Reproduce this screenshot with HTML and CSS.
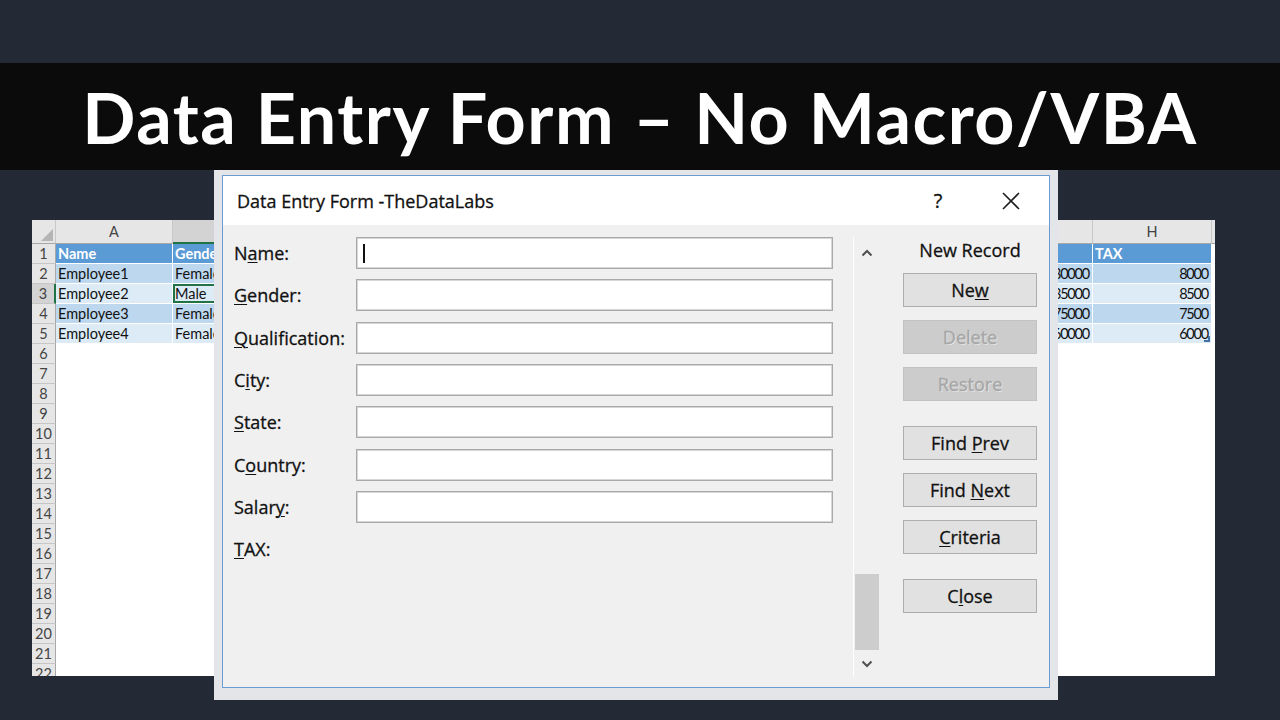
FILE: index.html
```html
<!DOCTYPE html>
<html lang="en">
<head>
<meta charset="utf-8">
<title>Data Entry Form – No Macro/VBA</title>
<link rel="stylesheet" href="styles.css">
</head>
<body>
<div class="topgap"></div>
<header class="band"><h1>Data Entry Form – No Macro/VBA</h1></header>
<main class="stage">
  <div class="sheet">
    <table class="grid">
      <colgroup>
        <col class="w-rh"><col class="w-a"><col class="w-b"><col class="w-c"><col class="w-d"><col class="w-e"><col class="w-f"><col class="w-g"><col class="w-h"><col class="w-i">
      </colgroup>
      <thead>
        <tr class="hdr">
          <th class="corner"><svg class="tri" width="12" height="12" viewBox="0 0 12 12"><polygon points="12,0 12,12 0,12" fill="#b5b5b5"/></svg></th>
          <th>A</th><th class="selcol"></th><th></th><th></th><th></th><th></th><th></th><th>H</th><th class="lastcol"></th>
        </tr>
      </thead>
      <tbody>
        <tr><td class="rh">1</td><td class="th">Name</td><td class="th">Gender</td><td class="th"></td><td class="th"></td><td class="th"></td><td class="th"></td><td class="th"></td><td class="th">TAX</td><td></td></tr>
        <tr><td class="rh">2</td><td class="bd">Employee1</td><td class="bd">Female</td><td class="bd"></td><td class="bd"></td><td class="bd"></td><td class="bd"></td><td class="bd num">80000</td><td class="bd num">8000</td><td></td></tr>
        <tr><td class="rh selrow">3</td><td class="bl">Employee2</td><td class="bl selcell">Male</td><td class="bl"></td><td class="bl"></td><td class="bl"></td><td class="bl"></td><td class="bl num">85000</td><td class="bl num">8500</td><td></td></tr>
        <tr><td class="rh">4</td><td class="bd">Employee3</td><td class="bd">Female</td><td class="bd"></td><td class="bd"></td><td class="bd"></td><td class="bd"></td><td class="bd num">75000</td><td class="bd num">7500</td><td></td></tr>
        <tr><td class="rh">5</td><td class="bl">Employee4</td><td class="bl">Female</td><td class="bl"></td><td class="bl"></td><td class="bl"></td><td class="bl"></td><td class="bl num">60000</td><td class="bl num handle">6000</td><td></td></tr>
        <tr><td class="rh">6</td><td></td><td></td><td></td><td></td><td></td><td></td><td></td><td></td><td></td></tr>
        <tr><td class="rh">7</td><td></td><td></td><td></td><td></td><td></td><td></td><td></td><td></td><td></td></tr>
        <tr><td class="rh">8</td><td></td><td></td><td></td><td></td><td></td><td></td><td></td><td></td><td></td></tr>
        <tr><td class="rh">9</td><td></td><td></td><td></td><td></td><td></td><td></td><td></td><td></td><td></td></tr>
        <tr><td class="rh">10</td><td></td><td></td><td></td><td></td><td></td><td></td><td></td><td></td><td></td></tr>
        <tr><td class="rh">11</td><td></td><td></td><td></td><td></td><td></td><td></td><td></td><td></td><td></td></tr>
        <tr><td class="rh">12</td><td></td><td></td><td></td><td></td><td></td><td></td><td></td><td></td><td></td></tr>
        <tr><td class="rh">13</td><td></td><td></td><td></td><td></td><td></td><td></td><td></td><td></td><td></td></tr>
        <tr><td class="rh">14</td><td></td><td></td><td></td><td></td><td></td><td></td><td></td><td></td><td></td></tr>
        <tr><td class="rh">15</td><td></td><td></td><td></td><td></td><td></td><td></td><td></td><td></td><td></td></tr>
        <tr><td class="rh">16</td><td></td><td></td><td></td><td></td><td></td><td></td><td></td><td></td><td></td></tr>
        <tr><td class="rh">17</td><td></td><td></td><td></td><td></td><td></td><td></td><td></td><td></td><td></td></tr>
        <tr><td class="rh">18</td><td></td><td></td><td></td><td></td><td></td><td></td><td></td><td></td><td></td></tr>
        <tr><td class="rh">19</td><td></td><td></td><td></td><td></td><td></td><td></td><td></td><td></td><td></td></tr>
        <tr><td class="rh">20</td><td></td><td></td><td></td><td></td><td></td><td></td><td></td><td></td><td></td></tr>
        <tr><td class="rh">21</td><td></td><td></td><td></td><td></td><td></td><td></td><td></td><td></td><td></td></tr>
        <tr><td class="rh">22</td><td></td><td></td><td></td><td></td><td></td><td></td><td></td><td></td><td></td></tr>
      </tbody>
    </table>
  </div>

  <div class="frame">
    <section class="dialog">
      <div class="titlebar">
        <span class="title">Data Entry Form -TheDataLabs</span>
        <span class="help">?</span>
        <span class="close"><svg width="20" height="20" viewBox="0 0 20 20"><path d="M2 2 L18 18 M18 2 L2 18" stroke="#1f1f1f" stroke-width="1.6" fill="none"/></svg></span>
      </div>
      <div class="body">
        <div class="fields">
          <div class="row"><label class="lbl">N<u>a</u>me:</label><div class="field"><span class="caret"></span></div></div>
          <div class="row"><label class="lbl"><u>G</u>ender:</label><div class="field"></div></div>
          <div class="row"><label class="lbl"><u>Q</u>ualification:</label><div class="field"></div></div>
          <div class="row"><label class="lbl">C<u>i</u>ty:</label><div class="field"></div></div>
          <div class="row"><label class="lbl"><u>S</u>tate:</label><div class="field"></div></div>
          <div class="row"><label class="lbl">C<u>o</u>untry:</label><div class="field"></div></div>
          <div class="row"><label class="lbl">Salar<u>y</u>:</label><div class="field"></div></div>
          <div class="row"><label class="lbl"><u>T</u>AX:</label></div>
        </div>
        <div class="scroll">
          <div class="arrow up"><svg width="12" height="8" viewBox="0 0 12 8"><path d="M1.5 6.5 L6 2 L10.5 6.5" stroke="#505050" stroke-width="2" fill="none"/></svg></div>
          <div class="thumb"></div>
          <div class="arrow down"><svg width="12" height="8" viewBox="0 0 12 8"><path d="M1.5 1.5 L6 6 L10.5 1.5" stroke="#505050" stroke-width="2" fill="none"/></svg></div>
        </div>
        <div class="buttons">
          <div class="newrec">New Record</div>
          <div class="btn">Ne<u>w</u></div>
          <div class="btn dis g13">Delete</div>
          <div class="btn dis g13">Restore</div>
          <div class="btn g25">Find <u>P</u>rev</div>
          <div class="btn g13">Find <u>N</u>ext</div>
          <div class="btn g13"><u>C</u>riteria</div>
          <div class="btn g25">C<u>l</u>ose</div>
        </div>
      </div>
    </section>
  </div>
</main>
</body>
</html>
```

FILE: styles.css
```css
* { box-sizing: border-box; }

html, body {
  margin: 0;
  padding: 0;
}

body {
  width: 1280px;
  height: 720px;
  overflow: hidden;
  background: #232a35;
  font-family: "Open Sans", "Noto Sans", sans-serif;
}

.topgap { height: 63px; }

.band {
  height: 107px;
  background: #0b0b0b;
  display: flex;
  align-items: center;
  justify-content: center;
}

.band h1 {
  margin: 0;
  color: #ffffff;
  font-family: Lato, "Open Sans", sans-serif;
  font-weight: 700;
  font-size: 70px;
  letter-spacing: 1.5px;
  line-height: 1;
  white-space: nowrap;
}

.stage {
  position: relative;
  height: 550px;
  padding-top: 50px;
}

/* ---------- spreadsheet ---------- */
.sheet {
  margin-left: 32px;
  width: 1183px;
  height: 456px;
  overflow: hidden;
  background: #ffffff;
}

.grid {
  border-collapse: separate;
  border-spacing: 0;
  table-layout: fixed;
  width: 1183px;
  font-family: Lato, "Open Sans", sans-serif;
  font-size: 14.5px;
  color: #111;
}

.w-rh { width: 24px; }
.w-a { width: 117px; }
.w-b { width: 150px; }
.w-c { width: 150px; }
.w-d { width: 150px; }
.w-e { width: 150px; }
.w-f { width: 160px; }
.w-g { width: 160px; }
.w-h { width: 119px; }
.w-i { width: 3px; }

.grid tr { height: 20px; }
.grid tr.hdr { height: 24px; }

.grid th, .grid td {
  padding: 0 2px;
  white-space: nowrap;
  overflow: hidden;
  line-height: 19px;
  text-align: left;
}

.grid th {
  background: #e6e6e6;
  font-weight: 400;
  color: #444;
  text-align: center;
  border-right: 1px solid #c8c8c8;
  border-bottom: 1px solid #a8a8a8;
  line-height: 23px;
}

.grid th.corner {
  position: relative;
  padding: 0;
}

.tri {
  position: absolute;
  right: 2px;
  bottom: 2px;
}

.grid th.selcol {
  background: #d3d3d3;
  border-bottom: 2px solid #217346;
}

.grid th.lastcol { border-right: none; }

.grid td.rh {
  background: #e6e6e6;
  color: #444;
  text-align: center;
  padding: 0;
  border-bottom: 1px solid #c6c6c6;
  border-right: 1px solid #a8a8a8;
}

.grid td.selrow {
  background: #d3d3d3;
  border-right: 2px solid #217346;
}

.grid td.th {
  background: #5b9bd5;
  color: #ffffff;
  font-weight: 700;
  border-right: 1px solid #ffffff;
  border-bottom: 1px solid #ffffff;
}

.grid td.bd {
  background: #bdd7ee;
  border-right: 1px solid #ffffff;
  border-bottom: 1px solid #ffffff;
}

.grid td.bl {
  background: #ddebf7;
  border-right: 1px solid #ffffff;
  border-bottom: 1px solid #ffffff;
}

.grid td.num {
  text-align: right;
  padding-right: 3px;
  letter-spacing: -1.2px;
}

.grid td.selcell {
  box-shadow: inset 0 0 0 2px #217346;
}

.grid td.handle {
  position: relative;
}

.grid td.handle::after {
  content: "";
  position: absolute;
  right: 1px;
  bottom: 1px;
  width: 4px;
  height: 4px;
  border-right: 2px solid #4472a8;
  border-bottom: 2px solid #4472a8;
}

/* ---------- dialog ---------- */
.frame {
  position: absolute;
  left: 214px;
  top: 0;
  width: 844px;
  height: 530px;
  background: #e4e5e8;
  padding: 5px 8px 12px 8px;
}

.dialog {
  height: 100%;
  border: 1px solid #6b9bd0;
  background: #f0f0f0;
  display: flex;
  flex-direction: column;
  color: #111;
  -webkit-text-stroke: 0.3px #111;
}

.titlebar {
  height: 49px;
  flex: none;
  background: #ffffff;
  display: flex;
  align-items: center;
  padding: 0 15px 0 14px;
  font-size: 18px;
}

.title { flex: 1; }

.help {
  width: 40px;
  text-align: center;
  font-size: 20px;
}

.close {
  width: 46px;
  margin-left: 30px;
  display: flex;
  justify-content: center;
}

.body {
  flex: 1;
  display: flex;
  padding: 12px 12px 0 11px;
}

.fields {
  width: 599px;
  display: flex;
  flex-direction: column;
  gap: 10.33px;
}

.row {
  height: 32px;
  display: flex;
  align-items: center;
}

.lbl {
  width: 122px;
  font-size: 18px;
  line-height: 32px;
  white-space: nowrap;
}

u {
  text-decoration: underline;
  text-decoration-thickness: 1px;
  text-underline-offset: 2px;
}

.field {
  flex: 1;
  height: 32px;
  background: #ffffff;
  border: 1px solid #a9a9a9;
  box-shadow: inset 0 0 0 1px #d6d6d6;
  position: relative;
}

.caret {
  position: absolute;
  left: 6px;
  top: 6px;
  width: 2px;
  height: 19px;
  background: #111;
}

.scroll {
  width: 27px;
  height: 440px;
  margin-left: 20px;
  border-left: 1px solid #ffffff;
  display: flex;
  flex-direction: column;
}

.arrow {
  display: flex;
  align-items: center;
  justify-content: center;
}

.arrow.up { height: 32px; }

.thumb {
  margin-top: 305px;
  margin-left: 1px;
  width: 24px;
  height: 76px;
  background: #cdcdcd;
}

.arrow.down { height: 27px; }

.buttons {
  width: 134px;
  margin-left: 23px;
  display: flex;
  flex-direction: column;
}

.newrec {
  height: 26px;
  line-height: 26px;
  margin-bottom: 10px;
  text-align: center;
  font-size: 18px;
  white-space: nowrap;
}

.btn {
  height: 34px;
  border: 1px solid #adadad;
  background: #e1e1e1;
  font-size: 18px;
  line-height: 32px;
  text-align: center;
  white-space: nowrap;
}

.btn.g13 { margin-top: 13px; }
.btn.g25 { margin-top: 25px; }

.btn.dis {
  background: #cccccc;
  border-color: #c2c2c2;
  color: #a6a6a6;
  -webkit-text-stroke: 0.3px #a6a6a6;
  text-shadow: 1px 1px 0 #e6e6e6;
}
```
